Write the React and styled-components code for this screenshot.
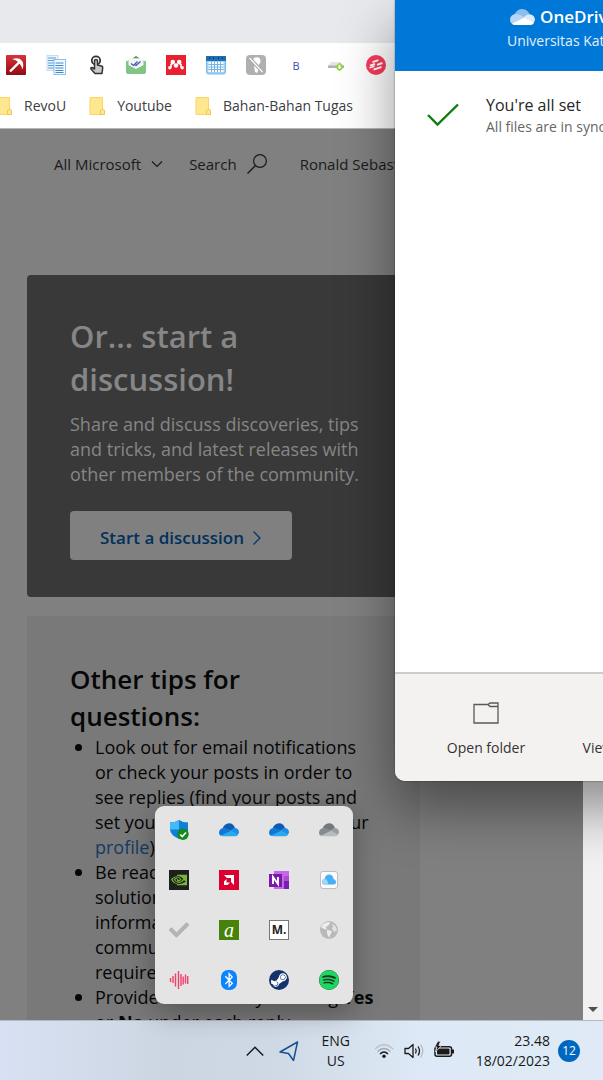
import React from 'react';
import styled, { createGlobalStyle } from 'styled-components';
import { SiNvidia } from 'react-icons/si';
import { FaSteamSymbol, FaSpotify, FaBluetoothB, FaCheck } from 'react-icons/fa';

const GlobalStyle = createGlobalStyle`
  * {
    box-sizing: border-box;
  }
  body {
    margin: 0;
    font-family: "Open Sans", "Noto Sans", sans-serif;
    overflow: hidden;
  }
  button {
    font-family: inherit;
    border: 0;
    padding: 0;
    background: none;
  }
  a {
    text-decoration: none;
    color: inherit;
  }
  svg {
    display: block;
    flex: none;
  }
`;

/* toolbar icons */

const PickaxeIcon = () => (
  <svg width="20" height="20" viewBox="0 0 20 20">
    <defs>
      <linearGradient id="pick" x1="0" y1="0" x2="0" y2="1">
        <stop offset="0" stopColor="#d8333a" />
        <stop offset="1" stopColor="#8f0d12" />
      </linearGradient>
    </defs>
    <rect width="20" height="20" rx="1" fill="url(#pick)" />
    <path d="M4 16.500 L13.500 7" stroke="#fff" strokeWidth="2.400" />
    <path d="M6 4 Q11 2.500 14 4 L16.500 6.500 Q18 9.500 16.500 14.500 Q15.500 10.500 13.500 8.500 L11.500 6.500 Q9.500 4.800 6 4Z" fill="#fff" />
  </svg>
);

const CopyIcon = () => (
  <svg width="20" height="20" viewBox="0 0 20 20">
    <rect x="1" y="0.500" width="11" height="15" fill="#e9f3fc" stroke="#c3dcf2" />
    <path d="M2 3h8M2 5.500h8M2 8h8M2 10.500h8M2 13h8" stroke="#5c9edb" />
    <rect x="8" y="4.500" width="11.500" height="15" fill="#f3f9fe" stroke="#8fbde6" />
    <path d="M9.500 8h8M9.500 10.500h8M9.500 13h8M9.500 15.500h8M9.500 17.500h8" stroke="#3f8ad3" />
  </svg>
);

const TouchIcon = () => (
  <svg width="20" height="20" viewBox="0 0 20 20">
    <circle cx="10" cy="5.500" r="4.200" fill="none" stroke="#333" strokeWidth="1.800" />
    <path
      d="M8.500 5.500 Q10 3.500 11.500 5.500 V10 L15.500 11 Q17 11.500 16.700 13 L16 18.500 H9 L5 14 Q4.300 12.800 6 12.500 L8.500 14Z"
      fill="#c9c9c9"
      stroke="#333"
      strokeWidth="1.500"
      strokeLinejoin="round"
    />
  </svg>
);

const MailCheckIcon = () => (
  <svg width="20" height="20" viewBox="0 0 20 20">
    <path d="M6 3.500 L10 1 L14 3.500Z" fill="#4f9a52" />
    <path d="M0 6.500 L3 5 V10 L10 13.500 L17 10 V5 L20 6.500 V17 Q20 19 18 19 H2 Q0 19 0 17Z" fill="#7fc583" />
    <path d="M2.500 3.500 H17.500 V10 L10 14 L2.500 10Z" fill="#f5f5f5" />
    <path d="M5 8.500 L7.500 10.500 L11.500 6.500 M9 10 L10 10.500 L14.500 6.500" fill="none" stroke="#4453b5" strokeWidth="1.300" />
  </svg>
);

const MendeleyIcon = () => (
  <svg width="20" height="20" viewBox="0 0 20 20">
    <rect width="20" height="20" fill="#e9202f" />
    <circle cx="6.800" cy="7" r="2.300" fill="#fff" />
    <circle cx="13.200" cy="7" r="2.300" fill="#fff" />
    <circle cx="10" cy="10.500" r="2.200" fill="#fff" />
    <path d="M5 12.500 V9.500 Q6 8 7.500 9 M15 12.500 V9.500 Q14 8 12.500 9" fill="none" stroke="#fff" strokeWidth="1.600" />
    <circle cx="3.800" cy="12.800" r="1.700" fill="#fff" />
    <circle cx="16.200" cy="12.800" r="1.700" fill="#fff" />
  </svg>
);

const CalendarIcon = () => (
  <svg width="20" height="20" viewBox="0 0 20 20">
    <rect x="0.500" y="1.500" width="19" height="17.500" rx="2" fill="#a3d0f1" stroke="#7fb9e4" />
    <rect x="0" y="1" width="20" height="5" fill="#1d6fb5" />
    <path d="M3 3h1M7 3h1M12 3h1M16 3h1" stroke="#0d3f70" strokeWidth="2" />
    <rect x="2.500" y="7" width="15" height="10" fill="#fff" />
    <path d="M2.500 9.500h15M2.500 12h15M2.500 14.500h15M5.500 7v10M8.500 7v10M11.500 7v10M14.500 7v10" stroke="#74b4e4" strokeWidth="1" />
  </svg>
);

const MutedIcon = () => (
  <svg width="20" height="20" viewBox="0 0 20 20">
    <rect width="20" height="20" rx="4" fill="#b0b0b0" />
    <circle cx="10.800" cy="6" r="3.700" fill="#fff" />
    <path d="M8 10 L13 9 L13 14 L11 18 L9 17Z" fill="#fff" />
    <path d="M3.500 3 L16.500 17" stroke="#aaa" strokeWidth="3.400" />
    <path d="M3.500 3 L16.500 17" stroke="#fff" strokeWidth="1.300" />
  </svg>
);

const DriveAddIcon = () => (
  <svg width="20" height="20" viewBox="0 0 20 20">
    <path d="M5 7 H14 L18 11 H2Z" fill="#e6e6e6" />
    <rect x="2" y="10.500" width="16" height="2.500" fill="#b2b2b2" />
    <path d="M13.500 7.800 L15.500 9.500 L17.800 11.800 L15.500 14.500 L13.500 16 L11.500 14.500 L9.500 11.800 L11.500 9.500Z" fill="#8fce3a" />
    <path d="M12.600 9.800h1.800v2h1.300l-2.200 2.400l-2.200 -2.400h1.300z" fill="#fff" />
  </svg>
);

const StripesIcon = () => (
  <svg width="20" height="20" viewBox="0 0 20 20">
    <circle cx="10" cy="10" r="10" fill="#f83b5c" />
    <path d="M6.500 7.200 L12.500 5.200 M4 10.700 L9 9 M11 9.800 L16.500 8 M7.500 14.700 L15.500 12" stroke="#fff" strokeWidth="1.900" />
    <path d="M3.500 12.800 L8.500 11.200" stroke="#fff" strokeWidth="1.500" />
  </svg>
);

const FolderMark = () => (
  <svg width="16" height="18" viewBox="0 0 16 18">
    <path d="M1 0.500h12.500v17H1z" fill="#ffe78f" stroke="#f6d767" />
    <path d="M11.500 13.500 Q15.500 11 15.500 14 V17.500 H11.500Z" fill="#ffe78f" stroke="#efc94c" />
  </svg>
);

/* page icons */

const Chevron = ({ dir, size = 12, color = 'currentColor', weight = 1.2 }) => {
  const paths = {
    down: 'M1 3.500 L6 8.500 L11 3.500',
    right: 'M3 0.500 L8.500 6 L3 11.500',
    up: 'M0.500 9 L6 3.500 L11.500 9',
  };
  return (
    <svg width={size} height={size} viewBox="0 0 12 12">
      <path d={paths[dir]} fill="none" stroke={color} strokeWidth={weight} />
    </svg>
  );
};

const SearchIcon = () => (
  <svg width="20" height="20" viewBox="0 0 20 20">
    <circle cx="13" cy="7" r="6.400" fill="none" stroke="#1b1b1b" strokeWidth="1.200" />
    <path d="M8.500 11.500 L0.500 19.500" stroke="#1b1b1b" strokeWidth="1.400" />
  </svg>
);

/* tray icons */

const cloudBlue = ['#0a5cb5', '#0f78d4', '#1a8fe3', '#2ba9f0'];
const cloudGray = ['#73787a', '#858a8c', '#9a9ea0', '#b9bcbe'];

const Cloud = ({ gray }) => {
  const [top, left, right, bottom] = gray ? cloudGray : cloudBlue;
  return (
    <svg width="20" height="20" viewBox="0 0 20 20">
      <path d="M3.500 8.500 Q5.500 3.500 10 3.300 Q14.500 3.500 16 8 L12.500 11 L7 9Z" fill={top} />
      <path d="M0 12.500 Q0.300 8.300 4.800 8 Q7 8 9 9.300 L13 11.600 L3 16 Q0 15.500 0 12.500Z" fill={left} />
      <path d="M11.500 10.800 Q13.500 7.600 16.300 8 Q20 8.800 20 12.300 L18.800 15Z" fill={right} />
      <path d="M2 15.500 L12 10.800 L19 14.700 Q18 16.300 16 16.300 H4.500 Q3 16.300 2 15.500Z" fill={bottom} />
    </svg>
  );
};

const ShieldIcon = () => (
  <svg width="20" height="20" viewBox="0 0 20 20">
    <path d="M10 0 Q14 2.500 19 2.500 V9 Q19 15 10 19 Q1 15 1 9 V2.500 Q6 2.500 10 0Z" fill="#0f7fd9" />
    <path d="M10 0 V9.500 H1 V2.500 Q6 2.500 10 0Z" fill="#43b9f5" />
    <path d="M10 9.500 H19 Q18 15.500 10 19Z" fill="#0964b8" />
    <circle cx="14" cy="14.300" r="5.700" fill="#138a1b" />
    <path d="M11.200 14.500 L13.300 16.500 L17 12.500" fill="none" stroke="#fff" strokeWidth="1.700" />
  </svg>
);

const AmdIcon = () => (
  <svg width="20" height="20" viewBox="0 0 20 20">
    <rect width="20" height="20" fill="#dc0030" />
    <path d="M5 5 H15 V15 L12 12 V8 H8Z" fill="#fff" />
    <path d="M7.500 9 V12.500 H11 L8.500 15 H5 V11.500Z" fill="#fff" />
  </svg>
);

const OneNoteIcon = () => (
  <svg width="20" height="20" viewBox="0 0 20 20">
    <rect x="5" y="1" width="15" height="18" fill="#c765e8" />
    <rect x="15" y="6" width="5" height="5" fill="#ae4bd5" />
    <rect x="15" y="11" width="5" height="8" fill="#7a1fb0" />
    <rect x="0" y="4" width="13" height="13" fill="#7719aa" />
    <path d="M4 14 V7 L9 14 V7" fill="none" stroke="#fff" strokeWidth="1.900" />
  </svg>
);

const ICloudIcon = () => (
  <svg width="20" height="20" viewBox="0 0 20 20">
    <rect x="1.500" y="1.500" width="17" height="17" rx="2.500" fill="#fbfbfb" stroke="#bebebe" />
    <path d="M3 12 Q3 9 5.500 9 Q6.500 4.500 10 4.500 Q14 4.500 14.500 9 Q17 9.500 17 12 Q17 14.500 14.500 14.500 H5.500 Q3 14.500 3 12Z" fill="#48aef5" />
    <path d="M3 12 Q3 9 5.500 9 Q9 9 9 14.500 H5.500 Q3 14.500 3 12Z" fill="#9fd6fb" />
  </svg>
);

const GlobeIcon = () => (
  <svg width="20" height="20" viewBox="0 0 20 20">
    <circle cx="10" cy="10" r="9" fill="#b9b9b9" />
    <path d="M4 4 Q8 1.500 11 2 L10 5 L7 7 L8 9.500 L5 9 L2 7Z" fill="#ececec" />
    <path d="M8 10 Q12 10 13 12 L11 15 L10.500 18 Q8 15 8 13Z" fill="#ececec" />
    <path d="M13 3.500 Q17 5.500 18 10 L15.500 12 L13 9 L14 6.500Z" fill="#e3e3e3" />
  </svg>
);

const WaveIcon = () => (
  <svg width="20" height="20" viewBox="0 0 20 20">
    <path d="M1.500 8v4M4 6v7M6.500 3.500v13M9.500 1v18M12 4v12M14.200 6.500v8M16.500 4.500v9M18.700 6v8" stroke="#f0406c" strokeWidth="1.400" />
  </svg>
);

const SendIcon = () => (
  <svg width="20" height="20" viewBox="0 0 20 20">
    <path d="M18.500 1 L1 11 L9.500 12.500 L14.500 19.500Z" fill="none" stroke="#17508f" strokeWidth="1.500" strokeLinejoin="round" />
  </svg>
);

const WifiIcon = () => (
  <svg width="20" height="20" viewBox="0 0 20 20" fill="none">
    <path d="M1 8 Q10 -0.500 19 8" stroke="#b9c0c9" strokeWidth="1.300" />
    <path d="M3.500 10.500 Q10 4.500 16.500 10.500" stroke="#a2a8b0" strokeWidth="1.300" />
    <path d="M6 13 Q10 9 14 13" stroke="#1a1a1a" strokeWidth="1.500" />
    <circle cx="10" cy="15.300" r="1.700" fill="#1a1a1a" />
  </svg>
);

const SpeakerIcon = () => (
  <svg width="20" height="20" viewBox="0 0 20 20" fill="none" stroke="#1a1a1a" strokeWidth="1.300">
    <path d="M1 7.500 H4.500 L9 3.500 V16.500 L4.500 12.500 H1Z" strokeLinejoin="round" />
    <path d="M11.500 7.500 Q13 10 11.500 12.500 M14 5.500 Q17 10 14 14.500" />
    <path d="M16.500 3.500 Q21 10 16.500 16.500" stroke="#b4bac2" />
  </svg>
);

const BatteryIcon = () => (
  <svg width="20" height="20" viewBox="0 0 20 20">
    <rect x="1" y="5.800" width="16.500" height="9.500" rx="2" fill="#dfeaf6" stroke="#1a1a1a" strokeWidth="1.500" />
    <rect x="3" y="7.600" width="12.500" height="6" rx="1" fill="#1a1a1a" />
    <rect x="18" y="8.500" width="2" height="4" fill="#1a1a1a" />
    <path d="M4 0 L0.500 6 H3 L1.500 11 L7.500 4.500 H4.800 L6.500 0.500Z" fill="#1a1a1a" stroke="#dfeaf6" strokeWidth="0.800" />
  </svg>
);

const OneDriveLogo = () => (
  <svg width="25" height="16" viewBox="0 0 25 16">
    <path d="M4.500 5.500 Q7 0 12.500 0 Q17.500 0.300 19.500 5 L15 9 L7 7Z" fill="#8ebef0" />
    <path d="M0 10.500 Q0.500 5.500 5.500 5 Q8.500 4.700 11.500 6.800 L15.500 9 L3.500 15.500 Q0 14.500 0 10.500Z" fill="#b6d6f6" />
    <path d="M14 8.300 Q16.500 4.700 20 5.200 Q25 6.500 25 11 L23.500 14.500Z" fill="#dcebfb" />
    <path d="M2 14.800 L14.500 8.500 L24 13.800 Q23 16 20.500 16 H5 Q3 16 2 14.800Z" fill="#fff" />
  </svg>
);

const FolderOutline = () => (
  <svg width="26" height="22" viewBox="0 0 26 22" fill="none" stroke="#595959" strokeWidth="1.300">
    <path d="M1 2.500 H15 L17 1 H25 V21 H1Z" />
    <path d="M15 2.500 L17 4.500 H25" />
  </svg>
);

const GreenCheck = () => (
  <svg width="32" height="24" viewBox="0 0 32 24">
    <path d="M1 12 L10.500 21.500 L31 1.500" fill="none" stroke="#107c10" strokeWidth="2.400" />
  </svg>
);

const extensions = [
  { name: 'Pickaxe', icon: <PickaxeIcon /> },
  { name: 'Copy', icon: <CopyIcon /> },
  { name: 'Touch', icon: <TouchIcon /> },
  { name: 'Mail tracker', icon: <MailCheckIcon /> },
  { name: 'Mendeley', icon: <MendeleyIcon /> },
  { name: 'Calendar', icon: <CalendarIcon /> },
  { name: 'Muted', icon: <MutedIcon /> },
  { name: 'B', icon: 'B' },
  { name: 'Drive', icon: <DriveAddIcon /> },
  { name: 'Stripes', icon: <StripesIcon /> },
];

const bookmarks = ['RevoU', 'Youtube', 'Bahan-Bahan Tugas'];

const trayApps = [
  { name: 'Security', icon: <ShieldIcon /> },
  { name: 'OneDrive personal', icon: <Cloud /> },
  { name: 'OneDrive work', icon: <Cloud /> },
  { name: 'OneDrive signed out', icon: <Cloud gray /> },
  { name: 'NVIDIA', icon: <SiNvidia size={16} />, bg: '#1f1f1f', color: '#76b73a' },
  { name: 'AMD', icon: <AmdIcon /> },
  { name: 'OneNote', icon: <OneNoteIcon /> },
  { name: 'iCloud', icon: <ICloudIcon /> },
  { name: 'Check', icon: <FaCheck size={20} />, color: '#b3b4b5' },
  { name: 'Script', icon: 'a', bg: '#47820a', color: '#fff', script: true },
  { name: 'Mendeley', icon: 'M.', bg: '#fff', color: '#222', outline: true },
  { name: 'Globe', icon: <GlobeIcon /> },
  { name: 'Wave', icon: <WaveIcon /> },
  { name: 'Bluetooth', icon: <FaBluetoothB size={16} />, bg: '#0a84ff', color: '#fff', pill: true },
  { name: 'Steam', icon: <FaSteamSymbol size={18} />, bg: '#14336b', color: '#fff', round: true },
  { name: 'Spotify', icon: <FaSpotify size={20} />, bg: '#1d3a27', color: '#1ed760', round: true },
];

function App() {
  return (
    <Desktop>
      <GlobalStyle />
      <TabStrip />
      <Extensions>
        {extensions.map((ext) => (
          <ExtensionButton key={ext.name} aria-label={ext.name}>{ext.icon}</ExtensionButton>
        ))}
      </Extensions>
      <Bookmarks>
        {bookmarks.map((name) => (
          <Bookmark href="#" key={name}>
            <FolderMark />
            {name}
          </Bookmark>
        ))}
      </Bookmarks>

      <Viewport>
        <Page>
          <SiteNav>
            <NavLink href="#">All Microsoft <Chevron dir="down" /></NavLink>
            <NavLink href="#">Search <SearchIcon /></NavLink>
            <NavLink href="#">Ronald Sebastian</NavLink>
          </SiteNav>
          <Cards>
            <DiscussCard>
              <DiscussTitle>Or... start a<br />discussion!</DiscussTitle>
              <DiscussText>
                Share and discuss discoveries, tips<br />
                and tricks, and latest releases with<br />
                other members of the community.
              </DiscussText>
              <StartButton>
                Start a discussion
                <Chevron dir="right" size={14} color="#0b3a66" />
              </StartButton>
            </DiscussCard>
            <TipsCard>
              <TipsTitle>Other tips for<br />questions:</TipsTitle>
              <TipList>
                <Tip>
                  <span>
                    Look out for email notifications<br />
                    or check your posts in order to<br />
                    see replies (find your posts and<br />
                    set your notifications inside your<br />
                    <a href="#">profile</a>).
                  </span>
                </Tip>
                <Tip>
                  <span>
                    Be ready to try out the<br />
                    solutions and give more<br />
                    information to the<br />
                    community when it is<br />
                    required.
                  </span>
                </Tip>
                <Tip>
                  <span>
                    Provide feedback by marking <b>Yes</b><br />
                    or <b>No</b> under each reply.
                  </span>
                </Tip>
              </TipList>
            </TipsCard>
          </Cards>
        </Page>
        <Scrollbar>
          <ScrollArrow />
        </Scrollbar>
      </Viewport>

      <Taskbar>
        <TaskButton aria-label="Hidden icons"><Chevron dir="up" size={18} color="#1a1a1a" weight={1} /></TaskButton>
        <TaskButton aria-label="Location"><SendIcon /></TaskButton>
        <Language><span>ENG</span><span>US</span></Language>
        <QuickSettings aria-label="Quick settings">
          <WifiIcon />
          <SpeakerIcon />
          <BatteryIcon />
        </QuickSettings>
        <Clock><span>23.48</span><span>18/02/2023</span></Clock>
        <Badge>12</Badge>
      </Taskbar>

      <Flyout>
        <FlyoutHeader>
          <FlyoutTitle><OneDriveLogo />OneDrive</FlyoutTitle>
          <FlyoutOrg>Universitas Katolik</FlyoutOrg>
        </FlyoutHeader>
        <FlyoutBody>
          <GreenCheck />
          <Status>
            <StatusTitle>You're all set</StatusTitle>
            <StatusText>All files are in sync</StatusText>
          </Status>
        </FlyoutBody>
        <FlyoutFooter>
          <FooterButton><FolderOutline />Open folder</FooterButton>
          <FooterButton><FolderOutline />View online</FooterButton>
        </FlyoutFooter>
      </Flyout>

      <TrayMenu>
        {trayApps.map(({ name, icon, ...look }) => (
          <TrayButton key={name} aria-label={name}>
            <TrayTile $look={look}>{icon}</TrayTile>
          </TrayButton>
        ))}
      </TrayMenu>
    </Desktop>
  );
}

export default App;

const Desktop = styled.div`
  position: relative;
  display: flex;
  flex-direction: column;
  height: 100vh;
  overflow: hidden;
  background: #fff;
`;

const TabStrip = styled.div`
  flex: none;
  height: 43px;
  background: #e8e9ed;
`;

const Extensions = styled.div`
  flex: none;
  display: flex;
  align-items: center;
  gap: 20px;
  height: 44px;
  padding-left: 6px;
`;

const ExtensionButton = styled.button`
  flex: none;
  width: 20px;
  height: 20px;
  font-size: 11px;
  color: #3f47b5;
`;

const Bookmarks = styled.nav`
  flex: none;
  display: flex;
  gap: 23px;
  height: 42px;
  padding-bottom: 4px;
  border-bottom: 1px solid #b8b8b8;
  margin-left: -4px;
`;

const Bookmark = styled.a`
  display: flex;
  align-items: center;
  gap: 12px;
  font-size: 14px;
  color: #3c4043;
  white-space: nowrap;
`;

const Viewport = styled.div`
  flex: 1;
  min-height: 0;
  display: flex;
  background: #808080;
`;

const Page = styled.main`
  flex: 1;
  min-width: 0;
  overflow: hidden;
`;

const SiteNav = styled.nav`
  display: flex;
  align-items: center;
  height: 70px;
  gap: 26px;
  padding-left: 54px;
`;

const NavLink = styled.a`
  display: flex;
  align-items: center;
  gap: 10px;
  font-size: 15px;
  color: #1b1b1b;
  white-space: nowrap;

  &:last-child {
    margin-left: 7px;
  }
`;

const Cards = styled.div`
  display: flex;
  flex-direction: column;
  gap: 19px;
  max-width: 420px;
  padding: 76px 0 0 27px;
`;

const DiscussCard = styled.section`
  padding: 40px 43px 37px;
  border-radius: 4px;
  background: #393939;
  color: #868686;
`;

const DiscussTitle = styled.h2`
  margin: 0;
  font-size: 31px;
  line-height: 43px;
  font-weight: 600;
`;

const DiscussText = styled.p`
  margin: 11px 0 24px;
  font-size: 18px;
  line-height: 25px;
  white-space: nowrap;
`;

const StartButton = styled.button`
  display: flex;
  align-items: center;
  gap: 6px;
  height: 49px;
  padding: 4px 28px 0 30px;
  border-radius: 4px;
  background: #808080;
  font-size: 17px;
  font-weight: 600;
  color: #00305c;
`;

const TipsCard = styled.section`
  padding: 45px 43px 40px;
  background: #797979;
  color: #060606;
`;

const TipsTitle = styled.h3`
  margin: 0;
  font-size: 26px;
  line-height: 37px;
  font-weight: 600;
`;

const TipList = styled.ul`
  margin: 0;
  padding: 0;
  list-style: none;
  font-size: 18px;
  line-height: 25px;
  white-space: nowrap;
`;

const Tip = styled.li`
  display: flex;
  gap: 13px;
  padding-left: 5px;

  &::before {
    content: '';
    flex: none;
    width: 7px;
    height: 7px;
    margin-top: 9px;
    border-radius: 50%;
    background: #060606;
  }

  a {
    color: #143a63;
  }
`;

const Scrollbar = styled.div`
  display: flex;
  flex-direction: column;
  justify-content: flex-end;
  align-items: center;
  width: 20px;
  padding-bottom: 8px;
  background: #f2f1f1;
`;

const ScrollArrow = styled.div`
  border: 5px solid transparent;
  border-top-color: #505050;
  border-bottom: 0;
`;

const Taskbar = styled.footer`
  flex: none;
  display: flex;
  align-items: center;
  justify-content: flex-end;
  height: 60px;
  padding-right: 23px;
  border-top: 1px solid #b3b9c2;
  background: linear-gradient(90deg, #d8e1f3, #ccd6e2 28%, #cfd9e5 45%, #dde9f6 70%, #dfeaf6);
  color: #1a1a1a;
  font-size: 14px;
  line-height: 20px;
`;

const TaskButton = styled.button`
  margin-right: 15px;
`;

const Language = styled.div`
  display: flex;
  flex-direction: column;
  align-items: center;
  width: 44px;
`;

const QuickSettings = styled.button`
  display: flex;
  gap: 10px;
  margin: 0 22px 0 16px;
`;

const Clock = styled.div`
  display: flex;
  flex-direction: column;
  align-items: flex-end;
  margin-right: 8px;
`;

const Badge = styled.div`
  width: 22px;
  height: 22px;
  border-radius: 50%;
  background: #0067c0;
  color: #fff;
  font-size: 12px;
  line-height: 22px;
  text-align: center;
`;

const Flyout = styled.aside`
  position: absolute;
  top: 0;
  bottom: 299px;
  right: -232px;
  width: 440px;
  display: flex;
  flex-direction: column;
  border-radius: 0 0 10px 10px;
  background: #fff;
  overflow: hidden;
  white-space: nowrap;
  box-shadow: 0 0 2px rgba(0, 0, 0, 0.5), 0 28px 56px rgba(0, 0, 0, 0.42);
`;

const FlyoutHeader = styled.header`
  height: 71px;
  padding: 4px 0 0 112px;
  background: #0078d7;
  color: #fff;
`;

const FlyoutTitle = styled.div`
  display: flex;
  align-items: center;
  gap: 5px;
  padding-left: 3px;
  font-size: 17px;
  line-height: 25px;
  font-weight: 600;
`;

const FlyoutOrg = styled.div`
  font-size: 14px;
  line-height: 24px;
  color: #e3f0fc;
`;

const FlyoutBody = styled.div`
  flex: 1;
  display: flex;
  align-items: flex-start;
  gap: 27px;
  padding: 32px 0 0 32px;
`;

const Status = styled.div`
  margin-top: -10px;
`;

const StatusTitle = styled.div`
  font-size: 16px;
  line-height: 24px;
  color: #262626;
`;

const StatusText = styled.div`
  font-size: 14px;
  line-height: 20px;
  color: #666;
`;

const FlyoutFooter = styled.footer`
  display: flex;
  height: 109px;
  padding-left: 36px;
  border-top: 2px solid #cfcdcc;
  background: #f3f2f1;
`;

const FooterButton = styled.button`
  display: flex;
  flex-direction: column;
  align-items: center;
  gap: 14px;
  width: 110px;
  margin-right: 24px;
  padding-top: 28px;
  font-size: 14px;
  color: #333;
`;

const TrayMenu = styled.div`
  position: absolute;
  right: 250px;
  bottom: 76px;
  display: grid;
  grid-template-columns: repeat(4, 50px);
  grid-auto-rows: 50px;
  justify-content: center;
  align-content: center;
  width: 198px;
  height: 198px;
  border-radius: 9px;
  background: #e4e4e4;
  box-shadow: 0 8px 28px rgba(0, 0, 0, 0.3);
`;

const TrayButton = styled.button`
  display: flex;
  align-items: center;
  justify-content: center;
`;

const TrayTile = styled.span`
  display: flex;
  align-items: center;
  justify-content: center;
  width: ${({ $look }) => ($look.pill ? '16px' : '20px')};
  height: 20px;
  border: ${({ $look }) => ($look.outline ? '1px solid #777' : '0')};
  border-radius: ${({ $look }) => ($look.round ? '50%' : $look.pill ? '7px' : '0')};
  background: ${({ $look }) => $look.bg || 'none'};
  color: ${({ $look }) => $look.color || 'inherit'};
  font-family: ${({ $look }) => ($look.script ? '"Liberation Serif", serif' : 'inherit')};
  font-style: ${({ $look }) => ($look.script ? 'italic' : 'normal')};
  font-size: ${({ $look }) => ($look.script ? '20px' : '12px')};
  font-weight: ${({ $look }) => ($look.script ? '400' : '700')};
  line-height: 16px;
`;
